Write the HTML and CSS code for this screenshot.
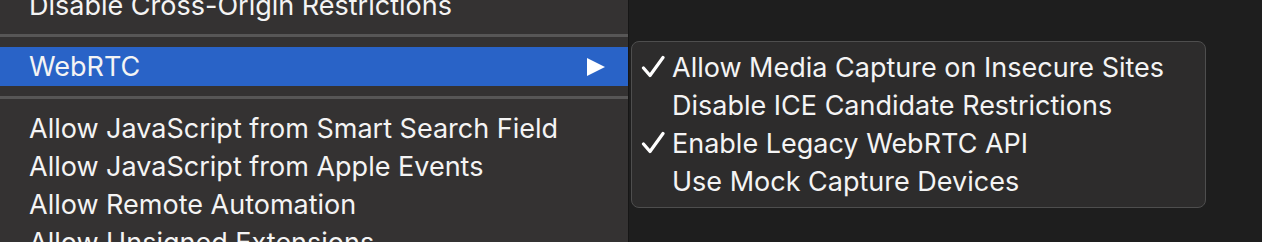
FILE: index.html
```html
<!DOCTYPE html>
<html>
<head>
<meta charset="utf-8">
<link rel="stylesheet" href="styles.css">
</head>
<body>
<div class="screen">
  <div class="menu">
    <div class="item">Disable Cross-Origin Restrictions</div>
    <div class="sep"></div>
    <div class="item active">
      <span>WebRTC</span>
      <svg class="arrow" width="20" height="20" viewBox="0 0 20 20"><polygon points="1,1 19,10 1,19" fill="#ffffff"/></svg>
    </div>
    <div class="sep"></div>
    <div class="item">Allow JavaScript from Smart Search Field</div>
    <div class="item">Allow JavaScript from Apple Events</div>
    <div class="item">Allow Remote Automation</div>
    <div class="item">Allow Unsigned Extensions</div>
  </div>
  <div class="submenu">
    <div class="sub-item">
      <span class="check"><svg width="24" height="24" viewBox="0 0 24 24"><path d="M2.5 13 L9 20.5 L22 2.5" fill="none" stroke="#ffffff" stroke-width="3.2" stroke-linecap="round" stroke-linejoin="round"/></svg></span>
      <span>Allow Media Capture on Insecure Sites</span>
    </div>
    <div class="sub-item">
      <span class="check"></span>
      <span>Disable ICE Candidate Restrictions</span>
    </div>
    <div class="sub-item">
      <span class="check"><svg width="24" height="24" viewBox="0 0 24 24"><path d="M2.5 13 L9 20.5 L22 2.5" fill="none" stroke="#ffffff" stroke-width="3.2" stroke-linecap="round" stroke-linejoin="round"/></svg></span>
      <span>Enable Legacy WebRTC API</span>
    </div>
    <div class="sub-item">
      <span class="check"></span>
      <span>Use Mock Capture Devices</span>
    </div>
  </div>
</div>
</body>
</html>
```
FILE: styles.css
```css
html, body {
  margin: 0;
  padding: 0;
  background: #1e1e1e;
  overflow: hidden;
}
.screen {
  position: relative;
  width: 1262px;
  height: 242px;
  overflow: hidden;
  font-family: Inter, "Liberation Sans", sans-serif;
  font-size: 27px;
  color: #f4f4f4;
}
.menu {
  width: 628px;
  height: 300px;
  margin-top: -14px;
  background: #343232;
  border-right: 1px solid #161616;
  display: flex;
  flex-direction: column;
}
.item {
  height: 38px;
  padding-left: 29px;
  padding-right: 22px;
  display: flex;
  align-items: center;
  justify-content: space-between;
  white-space: nowrap;
  flex: none;
}
.item.active {
  height: 39px;
  background: #2963c7;
}
.arrow {
  display: block;
}
.sep {
  flex: none;
  height: 3px;
  background: #575656;
  margin: 10px 0;
}
.submenu {
  position: absolute;
  left: 631px;
  top: 41px;
  width: 573px;
  height: 159px;
  background: #2d2c2c;
  border: 1px solid #4e4e4e;
  border-radius: 8px;
  box-sizing: content-box;
  padding-top: 6px;
  display: flex;
  flex-direction: column;
}
.sub-item {
  height: 38px;
  display: flex;
  align-items: center;
  white-space: nowrap;
}
.check {
  width: 31px;
  margin-left: 9px;
  display: flex;
  align-items: center;
}
.check svg {
  display: block;
}
```
